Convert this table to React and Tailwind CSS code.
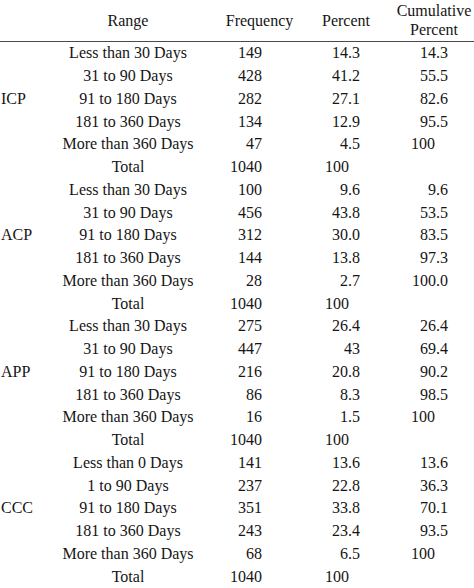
const groups = [
  {
    name: "ICP",
    rows: [
      ["Less than 30 Days", "149", "14.3", "14.3"],
      ["31 to 90 Days", "428", "41.2", "55.5"],
      ["91 to 180 Days", "282", "27.1", "82.6"],
      ["181 to 360 Days", "134", "12.9", "95.5"],
      ["More than 360 Days", "47", "4.5", "100"],
    ],
  },
  {
    name: "ACP",
    rows: [
      ["Less than 30 Days", "100", "9.6", "9.6"],
      ["31 to 90 Days", "456", "43.8", "53.5"],
      ["91 to 180 Days", "312", "30.0", "83.5"],
      ["181 to 360 Days", "144", "13.8", "97.3"],
      ["More than 360 Days", "28", "2.7", "100.0"],
    ],
  },
  {
    name: "APP",
    rows: [
      ["Less than 30 Days", "275", "26.4", "26.4"],
      ["31 to 90 Days", "447", "43", "69.4"],
      ["91 to 180 Days", "216", "20.8", "90.2"],
      ["181 to 360 Days", "86", "8.3", "98.5"],
      ["More than 360 Days", "16", "1.5", "100"],
    ],
  },
  {
    name: "CCC",
    rows: [
      ["Less than 0 Days", "141", "13.6", "13.6"],
      ["1 to 90 Days", "237", "22.8", "36.3"],
      ["91 to 180 Days", "351", "33.8", "70.1"],
      ["181 to 360 Days", "243", "23.4", "93.5"],
      ["More than 360 Days", "68", "6.5", "100"],
    ],
  },
];

function Row({ label, range, freq, pct, cum, total }) {
  return (
    <div className="grid h-[22.75px] grid-cols-[60px_136px_66px_98px_88px_26px] items-center leading-[22px]">
      <div className="pl-[1px]">{label}</div>
      <div className="text-center">{range}</div>
      <div className="text-right">{freq}</div>
      {total ? (
        <div className="pl-[63px] text-left">{pct}</div>
      ) : (
        <div className="text-right">{pct}</div>
      )}
      <div className={cum === "100" ? "pr-[13px] text-right" : "text-right"}>
        {cum}
      </div>
      <div />
    </div>
  );
}

export default function App() {
  return (
    <div
      className="h-[588px] w-[474px] overflow-hidden bg-white text-[16px] text-[#151515]"
      style={{ fontFamily: '"Liberation Serif", "Times New Roman", serif' }}
    >
      <div className="flex h-[42px] items-center border-b border-[#4a4a4a] pb-[1px] leading-[19px]">
        <div className="w-[60px]" />
        <div className="w-[136px] text-center">Range</div>
        <div className="w-[126px] pl-[1px] text-center">Frequency</div>
        <div className="w-[44px] text-center">Percent</div>
        <div className="w-[28px]" />
        <div className="w-[80px] shrink-0 whitespace-nowrap text-center">
          Cumulative
          <br />
          Percent
        </div>
      </div>
      {groups.map((g) => (
        <div key={g.name}>
          {g.rows.map((r, i) => (
            <Row
              key={i}
              label={i === 2 ? g.name : ""}
              range={r[0]}
              freq={r[1]}
              pct={r[2]}
              cum={r[3]}
            />
          ))}
          <Row label="" range="Total" freq="1040" pct="100" cum="" total />
        </div>
      ))}
    </div>
  );
}
